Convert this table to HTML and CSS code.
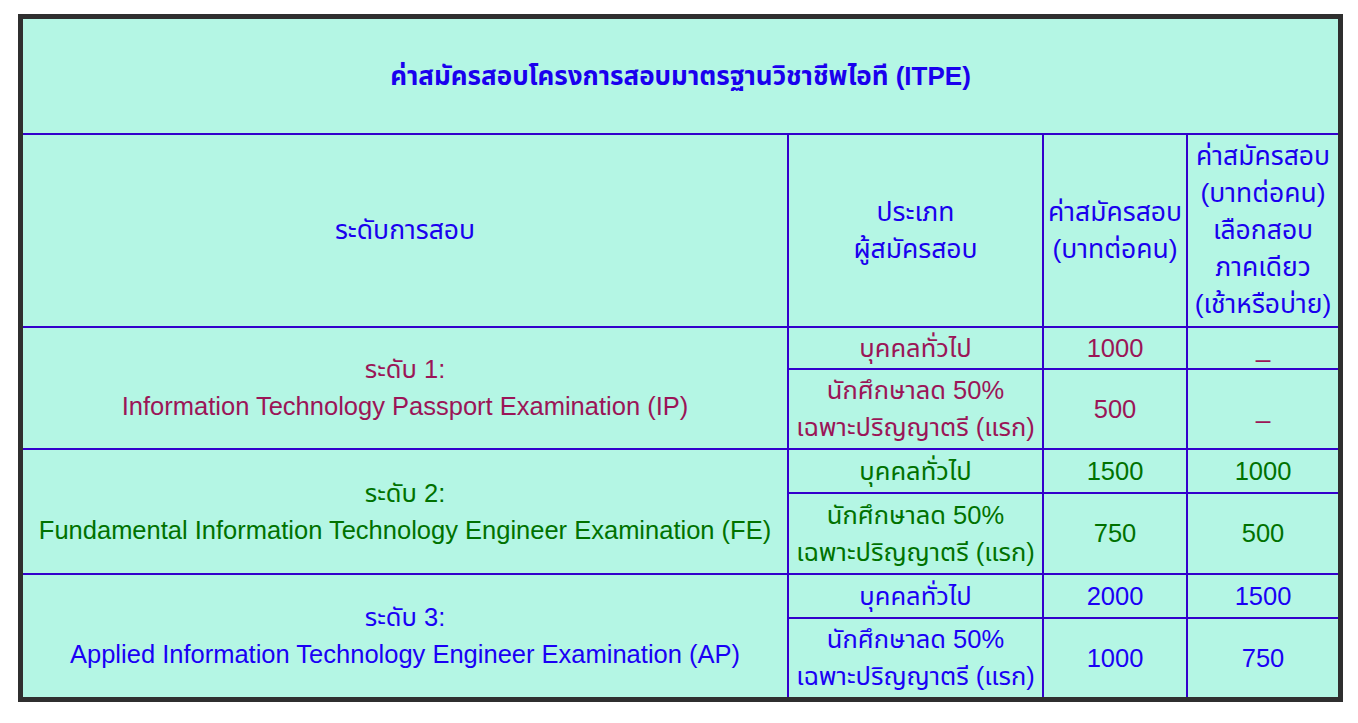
FILE: index.html
```html
<!DOCTYPE html>
<html lang="th">
<head>
<meta charset="utf-8">
<title>ITPE</title>
<link rel="stylesheet" href="styles.css">
</head>
<body>
<div class="page">
<table class="fees">
  <colgroup>
    <col class="c1"><col class="c2"><col class="c3"><col class="c4">
  </colgroup>
  <tr class="r-title">
    <td class="title last-col" colspan="4">ค่าสมัครสอบโครงการสอบมาตรฐานวิชาชีพไอที (ITPE)</td>
  </tr>
  <tr class="r-head">
    <td class="head">ระดับการสอบ</td>
    <td class="head">ประเภท<br>ผู้สมัครสอบ</td>
    <td class="head">ค่าสมัครสอบ<br>(บาทต่อคน)</td>
    <td class="head last-col">ค่าสมัครสอบ<br>(บาทต่อคน)<br>เลือกสอบ<br>ภาคเดียว<br>(เช้าหรือบ่าย)</td>
  </tr>
  <tr class="r1a lv1">
    <td rowspan="2">ระดับ 1:<br>Information Technology Passport Examination (IP)</td>
    <td>บุคคลทั่วไป</td>
    <td>1000</td>
    <td class="last-col">_</td>
  </tr>
  <tr class="r1b lv1">
    <td>นักศึกษาลด 50%<br>เฉพาะปริญญาตรี (แรก)</td>
    <td>500</td>
    <td class="last-col">_</td>
  </tr>
  <tr class="r2a lv2">
    <td rowspan="2">ระดับ 2:<br>Fundamental Information Technology Engineer Examination (FE)</td>
    <td>บุคคลทั่วไป</td>
    <td>1500</td>
    <td class="last-col">1000</td>
  </tr>
  <tr class="r2b lv2">
    <td>นักศึกษาลด 50%<br>เฉพาะปริญญาตรี (แรก)</td>
    <td>750</td>
    <td class="last-col">500</td>
  </tr>
  <tr class="r3a lv3">
    <td class="last-row" rowspan="2">ระดับ 3:<br>Applied Information Technology Engineer Examination (AP)</td>
    <td>บุคคลทั่วไป</td>
    <td>2000</td>
    <td class="last-col">1500</td>
  </tr>
  <tr class="r3b lv3">
    <td class="last-row">นักศึกษาลด 50%<br>เฉพาะปริญญาตรี (แรก)</td>
    <td class="last-row">1000</td>
    <td class="last-row last-col">750</td>
  </tr>
</table>
</div>
</body>
</html>
```

FILE: styles.css
```css
html, body {
  margin: 0;
  padding: 0;
  background: #ffffff;
}

.page {
  padding: 14px 0 0 18px;
}

.fees {
  width: 1325px;
  table-layout: fixed;
  border-collapse: separate;
  border-spacing: 0;
  border: 5px solid #2f2f2f;
  background: #b4f6e4;
  font-family: "Liberation Sans", Arial, "Noto Sans Thai", "Noto Sans", sans-serif;
  font-size: 25.5px;
  line-height: 37px;
}

.c1 { width: 766px; }
.c2 { width: 255px; }
.c3 { width: 144px; }
.c4 { width: 150px; }

.fees td {
  padding: 0;
  text-align: center;
  vertical-align: middle;
  white-space: nowrap;
  border-right: 2px solid #3300cc;
  border-bottom: 2px solid #3300cc;
}

.fees td.last-col { border-right: 0; }
.fees td.last-row { border-bottom: 0; }

.r-title { height: 116px; }
.r-head { height: 193px; }
.r1a { height: 42px; }
.r1b { height: 80px; }
.r2a { height: 44px; }
.r2b { height: 81px; }
.r3a { height: 44px; }
.r3b { height: 78px; }

.title {
  color: #1a00ee;
  font-weight: bold;
  font-size: 26px;
}

.head {
  color: #1a00ee;
  font-size: 26.5px;
}

.lv1 td { color: #9b1557; }
.lv2 td { color: #007200; }
.lv3 td { color: #1a00f5; }
```
